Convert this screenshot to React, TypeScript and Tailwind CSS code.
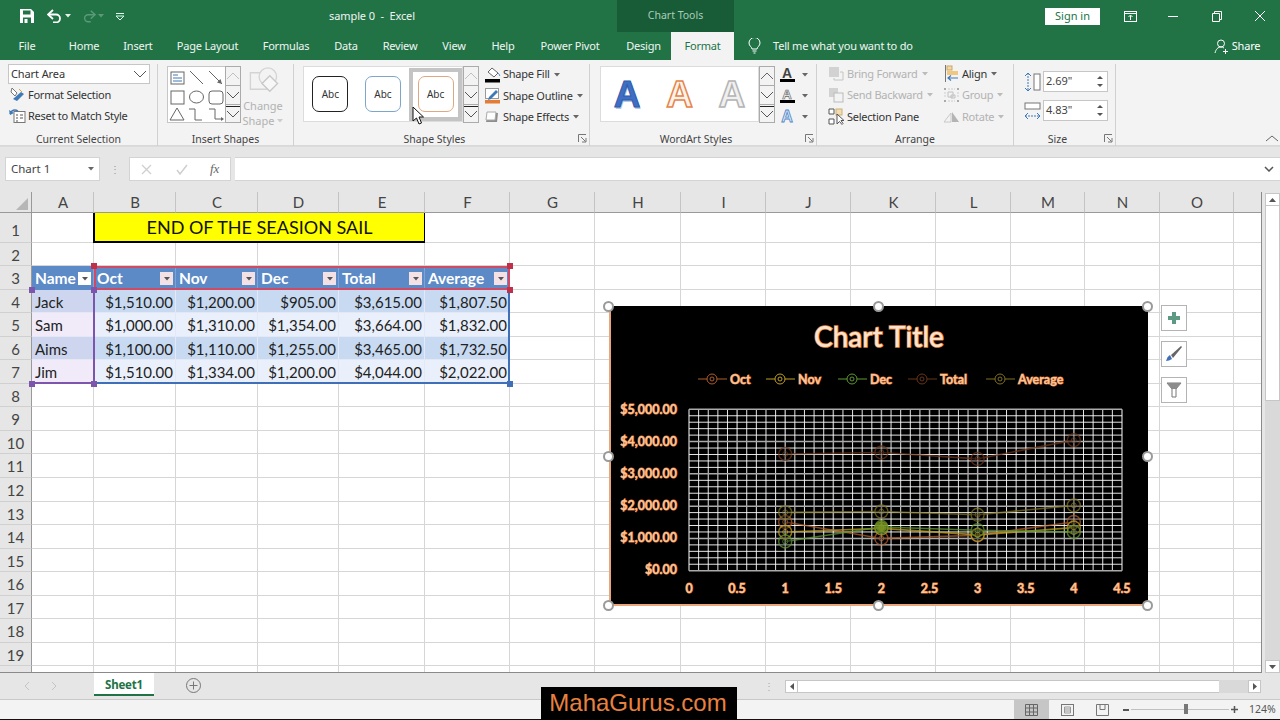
import React from "react";

const UI = "font-['Noto_Sans',sans-serif]";
const LETTERS = ["A","B","C","D","E","F","G","H","I","J","K","L","M","N","O",""];
const DATA = [
  ["Jack","$1,510.00","$1,200.00","$905.00","$3,615.00","$1,807.50"],
  ["Sam","$1,000.00","$1,310.00","$1,354.00","$3,664.00","$1,832.00"],
  ["Aims","$1,100.00","$1,110.00","$1,255.00","$3,465.00","$1,732.50"],
  ["Jim","$1,510.00","$1,334.00","$1,200.00","$4,044.00","$2,022.00"],
];
const TABS: [string,string][] = [
  ["File","w-[54px]"],["Home","w-[60px]"],["Insert","w-[48px]"],["Page Layout","w-[91px]"],["Formulas","w-[66px]"],
  ["Data","w-[54px]"],["Review","w-[54px]"],["View","w-[54px]"],["Help","w-[44px]"],["Power Pivot","w-[90px]"],["Design","w-[57px]"],
];

function Caret({c="#666"}:{c?:string}) {
  return <svg width="6" height="4" viewBox="0 0 6 4" className="shrink-0"><path d="M0 0h6L3 3.5z" fill={c}/></svg>;
}
function Chev({up=false,c="#555"}:{up?:boolean;c?:string}) {
  return <svg width="14" height="8" viewBox="0 0 14 8"><path d={up?"M1 7l6-6 6 6":"M1 1l6 6 6-6"} fill="none" stroke={c} strokeWidth="1"/></svg>;
}
function GalleryScroll({first="#aaa"}:{first?:string}) {
  return (
    <div className="w-[16px] h-[57px] flex flex-col border border-[#ababab] bg-[#f3f3f3] shrink-0">
      <div className="h-[19px] flex items-center justify-center border-b border-[#ababab]"><Chev up c={first}/></div>
      <div className="h-[19px] flex items-center justify-center border-b border-[#ababab]"><Chev/></div>
      <div className="flex-1 flex flex-col items-center"><div className="w-full h-px bg-[#222] mt-[1px] mb-[3px]"/><Chev/></div>
    </div>
  );
}
function Launcher() {
  return <svg width="9" height="9" viewBox="0 0 9 9" className="absolute right-[2px] bottom-[3px]"><path d="M.5 8V.5H8M3 3l4.5 4.5M4 8h4V4" fill="none" stroke="#777" strokeWidth="1"/></svg>;
}
function Group({w,label,children,launcher=false}:{w:string;label:string;children:React.ReactNode;launcher?:boolean}) {
  return (
    <div className={`${w} h-[82px] mt-[4px] relative flex flex-col border-r border-[#d0d0d0] shrink-0`}>
      <div className="h-[64px] min-h-0 shrink-0 flex">{children}</div>
      <div className={`h-[18px] shrink-0 flex items-center justify-center text-[10.5px] text-[#444] pt-[6px] ${launcher?"pr-[14px]":""}`}>{label}</div>
      {launcher && <Launcher/>}
    </div>
  );
}
function RowItem({icon,text,dim=false,caret=false,cn=""}:{icon:React.ReactNode;text:string;dim?:boolean;caret?:boolean;cn?:string}) {
  return (
    <div className={`h-[21.5px] flex items-center gap-[2px] text-[11px] tracking-[-0.25px] ${dim?"text-[#b2b2b2]":"text-[#333]"} ${cn}`}>
      <span className="w-[17px] h-[16px] flex items-center justify-center shrink-0">{icon}</span>
      <span className="whitespace-nowrap">{text}</span>
      {caret && <span className="ml-[2px]"><Caret c={dim?"#bbb":"#666"}/></span>}
    </div>
  );
}
function AbcBox({c,dark=false}:{c:string;dark?:boolean}) {
  return <div className={`w-[36px] h-[36px] rounded-[7px] border bg-white flex items-center justify-center text-[10px] text-[#333] ${dark?"border-[1.5px]":""}`} style={{borderColor:c}}>Abc</div>;
}
const I = {
  format:<svg width="17" height="16" viewBox="0 0 17 16"><path d="M3 1l5 5-2 3-4-4z" fill="#fff" stroke="#777"/><path d="M4 12l8-7 3 2-7 7z" fill="#3f79b8"/><path d="M10 2l3 3" stroke="#e0a040"/></svg>,
  reset:<svg width="17" height="16" viewBox="0 0 17 16"><rect x="5" y="3.5" width="11" height="11" fill="#fff" stroke="#777"/><path d="M7 7h2M11 7h3M7 10h2M11 10h3M7 13h2" stroke="#555"/><path d="M1 6c1-4 5-5 8-3" fill="none" stroke="#3f79b8" strokeWidth="1.4"/><path d="M0 2l1 5 4-2z" fill="#3f79b8"/></svg>,
  fill:<svg width="17" height="16" viewBox="0 0 17 16"><path d="M8 1l6 5-4 4-6-5z" fill="#fff" stroke="#666"/><path d="M14 6c1 1 2 2 1.5 3" stroke="#4a84c4" fill="none"/><rect x="1" y="12" width="15" height="3.5" fill="#000"/></svg>,
  outline:<svg width="17" height="16" viewBox="0 0 17 16"><rect x="1.5" y=".5" width="13" height="10" fill="#fff" stroke="#999"/><path d="M5 9l7-7 2 2-7 7-3 1z" fill="#3f79b8"/><rect x="1" y="12" width="15" height="3.5" fill="#e37c34"/></svg>,
  effects:<svg width="17" height="16" viewBox="0 0 17 16"><path d="M4 4h10l-1 9H2z" fill="#8d8d8d"/><path d="M3 3h9l-1 8H2z" fill="#fdfdfd" stroke="#aaa"/></svg>,
  bring:<svg width="17" height="16" viewBox="0 0 17 16"><rect x="1" y="1" width="10" height="10" fill="#d2d2d2"/><path d="M12 6h3v8H6v-2" fill="none" stroke="#c4c4c4"/></svg>,
  send:<svg width="17" height="16" viewBox="0 0 17 16"><rect x="1" y="1" width="9" height="9" fill="#d2d2d2"/><rect x="6" y="6" width="9" height="9" fill="#f3f3f3" stroke="#bbb"/></svg>,
  pane:<svg width="17" height="17" viewBox="0 0 17 17"><path d="M1 1h5v5H1zM1 11h5v5H1z" fill="#fff" stroke="#555"/><rect x="8" y="1" width="6" height="6" fill="#f2ddae" stroke="#c9b07c"/><path d="M9 6v10l2.5-2.5 2.5 3 1-1-2-3h3z" fill="#fff" stroke="#555"/></svg>,
  align:<svg width="17" height="17" viewBox="0 0 17 17"><path d="M2.5 0v17" stroke="#777"/><rect x="4" y="1" width="5" height="4" fill="#f3d9a6" stroke="#c9a86a"/><rect x="4" y="6" width="11" height="4" fill="#f0c77f"/><path d="M15 13H5M8 10.5L5 13l3 2.5" fill="none" stroke="#3f79b8" strokeWidth="1.2"/></svg>,
  group:<svg width="17" height="16" viewBox="0 0 17 16"><path d="M1 1h2v2H1zM14 1h2v2h-2zM1 13h2v2H1zM14 13h2v2h-2z" fill="#aaa"/><path d="M5 2h7M5 14h7M2 5v6M15 5v6" stroke="#ccc" strokeDasharray="2 1"/><path d="M5 5h5v5H5zM8 8h4v3H8z" fill="none" stroke="#c0c0c0"/></svg>,
  rotate:<svg width="17" height="16" viewBox="0 0 17 16"><path d="M1 13L8 4v9z" fill="none" stroke="#c8c8c8"/><path d="M9 3l7 10H9z" fill="#b4b4b4"/></svg>,
};

function Ribbon() {
  return (
    <div className="h-[86px] bg-[#f3f3f3] flex border-b border-[#d8d8d8] shrink-0 relative">
      <Group w="w-[158px]" label="Current Selection">
        <div className="pl-[8px] flex flex-col">
          <div className="w-[142px] h-[20px] bg-white border border-[#c6c6c6] flex items-center justify-between px-[2px] pr-[2px] text-[11px] tracking-[-0.1px] text-[#333]"><span>Chart Area</span><Chev/></div>
          <RowItem cn="ml-[1px]" icon={I.format} text="Format Selection"/>
          <RowItem cn="ml-[1px]" icon={I.reset} text="Reset to Match Style"/>
        </div>
      </Group>
      <Group w="w-[136px]" label="Insert Shapes">
        <div className="pl-[9px] pt-[2px] flex">
          <div className="w-[58px] h-[57px] bg-white border border-r-0 border-[#c6c6c6]">
            <svg width="58" height="55" viewBox="0 0 58 55">
              <rect x="3" y="5" width="13" height="12" fill="#fff" stroke="#666"/><path d="M5 8h5M5 11h9M5 14h9" stroke="#3f79b8"/>
              <path d="M22 4l13 13M41 4l13 13" stroke="#666"/><path d="M54 17l-5-1.5 3.5-3.5z" fill="#666"/>
              <rect x="3" y="24" width="13" height="13" fill="none" stroke="#666"/><ellipse cx="28.5" cy="30" rx="7" ry="6" fill="none" stroke="#666"/><rect x="41" y="24" width="14" height="13" rx="3" fill="none" stroke="#666"/>
              <path d="M9 41l7 12H2z" fill="none" stroke="#666"/><path d="M21 42h6v11h7M41 42h6v10h7" fill="none" stroke="#666"/><path d="M56 52l-3-2v4z" fill="#666"/>
            </svg>
          </div>
          <GalleryScroll first="#c0c0c0"/>
          <div className="w-[44px] flex flex-col items-center text-[11px] text-[#b2b2b2] leading-[15px]">
            <svg width="32" height="32" viewBox="0 0 32 32" className="mb-[1px]"><path d="M3 7h17v17H3z" fill="none" stroke="#d4d4d4" strokeWidth="1.4"/><circle cx="21" cy="11" r="9" fill="#f3f3f3" stroke="#d4d4d4" strokeWidth="1.4"/><path d="M15 18l8-8 8 8-8 8z" fill="#f7f7f7" stroke="#c8c8c8" strokeWidth="1.4"/></svg>
            <span>Change</span>
            <span className="flex items-center gap-[3px]">Shape<Caret c="#ccc"/></span>
          </div>
        </div>
      </Group>
      <Group w="w-[296px]" label="Shape Styles" launcher>
        <div className="pl-[9px] pt-[2px] flex">
          <div className="w-[160px] h-[56px] bg-white relative flex items-center border border-[#dcdcdc]">
            <div className="w-[53px] flex justify-center"><AbcBox c="#222" dark/></div>
            <div className="w-[53px] flex justify-center"><AbcBox c="#7da6c8"/></div>
            <div className="w-[53px] h-[53px] flex justify-center items-center border-[4px] border-[#c4c4c4]"><AbcBox c="#e0a880"/></div>
            <svg width="13" height="20" viewBox="0 0 13 20" className="absolute left-[108px] top-[39px]"><path d="M1 1v14l3.5-3 2.5 6 2.5-1-2.5-6h4.500z" fill="#fff" stroke="#111"/></svg>
          </div>
          <GalleryScroll first="#c0c0c0"/>
          <div className="pl-[5px] flex flex-col -mt-[2px]">
            <RowItem icon={I.fill} text="Shape Fill" caret/>
            <RowItem icon={I.outline} text="Shape Outline" caret/>
            <RowItem icon={I.effects} text="Shape Effects" caret/>
          </div>
        </div>
      </Group>
      <Group w="w-[227px]" label="WordArt Styles" launcher>
        <div className="pl-[10px] pt-[2px] flex">
          <div className="w-[159px] h-[56px] bg-white border border-[#dcdcdc] flex items-center font-['Liberation_Sans',sans-serif] font-bold text-[37px] leading-none">
            <span className="w-[53px] text-center text-[#3f6fc4] [-webkit-text-stroke:1px_#2f5ba8] [text-shadow:1px_2px_0_#b4c8ea]">A</span>
            <span className="w-[53px] text-center text-[#fdf3ea] [-webkit-text-stroke:1.5px_#e5854a]">A</span>
            <span className="w-[53px] text-center text-[#f0f0f0] [-webkit-text-stroke:1.5px_#b4b4b4]">A</span>
          </div>
          <GalleryScroll first="#666"/>
          <div className="pl-[4px] flex flex-col -mt-[2px] w-[50px]">
            {[
              <><span className="text-[14px] font-bold text-[#444] leading-[11px]">A</span><span className="h-[3px] w-[15px] bg-black"/></>,
              <><span className="text-[13px] text-[#fff] [-webkit-text-stroke:.7px_#666] leading-[11px] font-bold">A</span><span className="h-[3px] w-[15px] bg-black"/></>,
              <><span className="text-[16px] text-[#dbe7f5] [-webkit-text-stroke:.8px_#4f86c6] leading-[16px] font-bold">A</span></>,
            ].map((a,i)=>(
              <div key={i} className="h-[21.5px] flex items-center gap-[7px] font-['Liberation_Sans',sans-serif]">
                <span className="w-[16px] flex flex-col items-center">{a}</span><Caret/>
              </div>
            ))}
          </div>
        </div>
      </Group>
      <Group w="w-[197px]" label="Arrange">
        <div className="pl-[11px] flex -mt-[1px] w-full">
          <div className="w-[115px] flex flex-col shrink-0">
            <RowItem dim icon={I.bring} text="Bring Forward" caret/>
            <RowItem dim icon={I.send} text="Send Backward" caret/>
            <RowItem icon={I.pane} text="Selection Pane"/>
          </div>
          <div className="flex flex-col">
            <RowItem icon={I.align} text="Align" caret/>
            <RowItem dim icon={I.group} text="Group" caret/>
            <RowItem dim icon={I.rotate} text="Rotate" caret/>
          </div>
        </div>
      </Group>
      <Group w="w-[102px]" label="Size" launcher>
        <div className="pl-[10px] pt-[7px] flex flex-col gap-[8px]">
          {[
            ['2.69"',<svg key="a" width="17" height="20" viewBox="0 0 17 20"><path d="M4 1v18" stroke="#3f79b8" strokeDasharray="2 1"/><path d="M1 4l3-3 3 3M1 16l3 3 3-3" fill="none" stroke="#3f79b8"/><rect x="10" y="2" width="6" height="16" fill="#fff" stroke="#777"/></svg>],
            ['4.83"',<svg key="b" width="17" height="20" viewBox="0 0 17 20"><rect x="1" y="2" width="15" height="6" fill="#fff" stroke="#777"/><path d="M1 15h15" stroke="#3f79b8" strokeDasharray="2 1"/><path d="M4 12l-3 3 3 3M13 12l3 3-3 3" fill="none" stroke="#3f79b8"/></svg>],
          ].map((r:any,i)=>(
            <div key={i} className="flex items-center gap-[2px]">
              {r[1]}
              <div className="w-[65px] h-[21px] bg-white border border-[#c6c6c6] flex items-center justify-between pl-[2px] pr-[4px] text-[11px] text-[#444]">
                <span>{r[0]}</span>
                <span className="flex flex-col gap-[5px]"><svg width="6" height="3" viewBox="0 0 6 3"><path d="M0 3h6L3 0z" fill="#555"/></svg><svg width="6" height="3" viewBox="0 0 6 3"><path d="M0 0h6L3 3z" fill="#555"/></svg></span>
              </div>
            </div>
          ))}
        </div>
      </Group>
      <div className="flex-1 relative">
        <svg width="14" height="7" viewBox="0 0 14 7" className="absolute right-[1px] bottom-[3px]"><path d="M1 6l6-5 6 5" fill="none" stroke="#666"/></svg>
      </div>
    </div>
  );
}

function TopBars() {
  return (
    <div className="bg-[#217346] text-white shrink-0">
      <div className="h-[32px] flex items-center relative">
        <svg width="14" height="14" viewBox="0 0 14 14" className="ml-[20px]"><path d="M0 0h11l3 3v11H0z" fill="#fff"/><rect x="3" y="1.5" width="7.5" height="4" fill="#217346"/><rect x="3" y="8.5" width="8" height="5.5" fill="#217346"/><rect x="4.5" y="10" width="3" height="4" fill="#fff"/></svg>
        <svg width="16" height="14" viewBox="0 0 16 14" className="ml-[13px]"><path d="M2 5.5h7a4 4 0 010 8H6" fill="none" stroke="#fff" strokeWidth="1.8"/><path d="M6 1L1 5.5 6 10" fill="none" stroke="#fff" strokeWidth="1.8"/></svg>
        <span className="ml-[2px]"><Caret c="#e6efe9"/></span>
        <svg width="14" height="14" viewBox="0 0 16 14" className="ml-[11px]"><path d="M14 5.5H7a4 4 0 000 8h3" fill="none" stroke="#5d9978" strokeWidth="1.6"/><path d="M10 1l5 4.5L10 10" fill="none" stroke="#5d9978" strokeWidth="1.6"/></svg>
        <span className="ml-[2px]"><Caret c="#5d9978"/></span>
        <svg width="8" height="7" viewBox="0 0 8 7" className="ml-[12px]"><path d="M0 .5h8" stroke="#dfe" /><path d="M0 3h8L4 7z" fill="none" stroke="#dfe"/></svg>
        <div className="w-[120px] ml-[188px] text-center text-[11px] tracking-[-0.1px] text-[#f0f5f2] whitespace-pre">sample 0  -  Excel</div>
        <div className="w-[117px] ml-[185px] h-full bg-[#185c37] flex items-center justify-center text-[10.5px] text-[#a9cdb9]">Chart Tools</div>
        <div className="ml-[311px] w-[55px] h-[17px] bg-white text-[#217346] text-[11px] flex items-center justify-center">Sign in</div>
        <svg width="13" height="11" viewBox="0 0 13 11" className="ml-[24px]"><rect x=".5" y=".5" width="12" height="10" fill="none" stroke="#fff"/><path d="M1 2.5h11M6.5 9V4.5M4.5 6l2-2 2 2" fill="none" stroke="#fff"/></svg>
        <div className="ml-[31px] w-[10px] h-px bg-white"/>
        <svg width="10" height="11" viewBox="0 0 10 11" className="ml-[34px]"><path d="M.5 2.5h7v8h-7zM2.5 2.5V.5h7v8h-2" fill="none" stroke="#fff"/></svg>
        <svg width="10" height="10" viewBox="0 0 10 10" className="ml-[33px]"><path d="M0 0l10 10M10 0L0 10" stroke="#fff"/></svg>
      </div>
      <div className="h-[28px] flex items-center text-[11px] tracking-[-0.2px]">
        {TABS.map(([t,w])=><div key={t} className={`${w} h-full flex items-center justify-center text-[#f0f5f2] shrink-0`}>{t}</div>)}
        <div className="w-[63px] -ml-px h-full bg-[#f3f3f3] text-[#217346] flex items-center justify-center shrink-0">Format</div>
        <svg width="13" height="16" viewBox="0 0 13 16" className="ml-[14px]"><path d="M4 11c0-2-3-3-3-6a5.5 5.5 0 0111 0c0 3-3 4-3 6zM4.5 13h4M5.5 15h2" fill="none" stroke="#fff" strokeWidth="1"/></svg>
        <span className="ml-[12px] text-[#f0f5f2] text-[11px]">Tell me what you want to do</span>
        <svg width="15" height="15" viewBox="0 0 15 15" className="ml-[301px]"><circle cx="7" cy="4.5" r="3.5" fill="none" stroke="#fff"/><path d="M1 14c1-4 3-6 6-6 1 0 2 .3 3 1M9 12.5h5M11.5 10v5" fill="none" stroke="#fff"/></svg>
        <span className="ml-[3px] text-[11px]">Share</span>
      </div>
    </div>
  );
}

function FormulaBar() {
  return (
    <div className="h-[46px] bg-[#e6e6e6] shrink-0 pt-[11px] shadow-[inset_0_1px_0_#dcdcdc]">
      <div className="h-[24px] flex items-stretch">
        <div className="ml-[5px] w-[95px] bg-white border border-[#d4d4d4] flex items-center justify-between px-[5px] text-[11.5px] text-[#444]"><span>Chart 1</span><Caret/></div>
        <div className="w-[29px] flex items-center justify-center text-[#999] text-[10px] leading-none">⋮</div>
        <div className="w-[102px] bg-white border border-[#d4d4d4] flex items-center text-[#c8c8c8] font-['Liberation_Serif',serif]">
          <svg width="11" height="11" viewBox="0 0 11 11" className="ml-[11px]"><path d="M1 1l9 9M10 1l-9 9" stroke="#cfcfcf" strokeWidth="1.3"/></svg>
          <svg width="12" height="11" viewBox="0 0 12 11" className="ml-[24px]"><path d="M1 6l3 4 7-9" fill="none" stroke="#cfcfcf" strokeWidth="1.5"/></svg>
          <span className="ml-[22px] text-[13px] italic text-[#666]">fx</span>
        </div>
        <div className="ml-[4px] flex-1 bg-white border-y border-[#d4d4d4] flex items-center justify-end pr-[6px]"><svg width="10" height="6" viewBox="0 0 10 6"><path d="M1 1l4 4 4-4" fill="none" stroke="#555" strokeWidth="1.5"/></svg></div>
      </div>
    </div>
  );
}

const HDR = "bg-[#e6e6e6] flex items-center justify-center text-[#444] text-[15px]";
const CELL = "border-r border-b border-[#d6d6d6] bg-white";

function Filter({pink=false}:{pink?:boolean}) {
  return <span className={`w-[13px] h-[13px] absolute right-[2px] top-[6px] flex items-center justify-center ${pink?"bg-[#f4e1e6]":"bg-white"}`}><Caret c="#555"/></span>;
}
function Num({n}:{n:number}) {
  return <div className={`${HDR} border-r border-b border-r-[#999] border-b-[#d0d0d0] ${n===1?"pt-[6px]":"pt-[2px]"}`}>{n}</div>;
}
function Blank({n,from=0}:{n:number;from?:number}) {
  return <>{Array.from({length:n}).map((_,i)=><div key={i+from} className={CELL}/>)}</>;
}
function Handle({x,y,c}:{x:number;y:number;c:string}) {
  return <span className="absolute w-[6px] h-[6px]" style={{left:x-3,top:y-3,background:c}}/>;
}

function Sheet() {
  return (
    <div className="relative w-[1262px] h-[481px] overflow-hidden border-r border-b border-[#8a8a8a] shrink-0 font-['Lato',sans-serif]">
      <div className="grid grid-cols-[32px_62px_82px_82px_81px_86px_85px_85px_86px_85px_85px_85px_75px_74px_75px_74px_28px] grid-rows-[20.5px_30px_repeat(19,23.55px)]">
        <div className={`${HDR} border-r border-b border-[#999] relative`}><svg width="12" height="12" viewBox="0 0 12 12" className="absolute right-[3px] bottom-[2px]"><path d="M12 0v12H0z" fill="#b6b6b6"/></svg></div>
        {LETTERS.map((l,i)=><div key={i} className={`${HDR} border-r border-r-[#c4c4c4] border-b border-b-[#999] pt-[1px] pl-[1px]`}>{l}</div>)}
        <Num n={1}/>
        <div className={CELL}/>
        <div className="col-span-4 bg-[#ffff00] border-2 border-t-0 border-black flex items-center justify-center text-[18px] text-[#111] leading-none -ml-px -mr-[1px] pt-[1px]">END OF THE SEASION SAIL</div>
        <Blank n={11}/>
        <Num n={2}/>
        <Blank n={16}/>
        <Num n={3}/>
        {["Name","Oct","Nov","Dec","Total","Average"].map((h,i)=>(
          <div key={h} className="relative bg-[#5b8ac6] border-r border-[#7ea3d3] text-white font-bold text-[15.5px] flex items-center pl-[3px] pt-[2px]">
            {h}<Filter pink={i>0}/>
          </div>
        ))}
        <Blank n={10}/>
        {DATA.map((r,ri)=>(
          <React.Fragment key={ri}>
            <Num n={ri+4}/>
            {r.map((v,ci)=>{
              const bg = ci===0 ? (ri%2===0?"bg-[#cdd6ee]":"bg-[#f0eaf9]") : (ri%2===0?"bg-[#c7daf2]":"bg-[#e9f0fb]");
              return <div key={ci} className={`${bg} border-r border-b border-[#e3e8f4] text-[#222] text-[15px] flex items-center pt-[2px] ${ci===0?"pl-[3px]":"justify-end pr-[2px]"}`}>{v}</div>;
            })}
            <Blank n={10}/>
          </React.Fragment>
        ))}
        {Array.from({length:13}).map((_,i)=>(
          <React.Fragment key={i}>
            <Num n={i+8}/>
            <Blank n={16}/>
          </React.Fragment>
        ))}
      </div>

      <div className="absolute left-[94px] top-[74px] w-[416px] h-[24px] border-2 border-[#d14a63]"/>
      <div className="absolute left-[94px] top-[97px] w-[416px] h-[95px] border-2 border-t-0 border-l-0 border-[#3f6fb8]"/>
      <div className="absolute left-[32px] top-[97px] w-[63px] h-[95px] border-b-2 border-r-2 border-[#7d55ad]"/>
      <Handle x={94} y={74} c="#c0304a"/><Handle x={510} y={74} c="#c0304a"/><Handle x={94} y={98} c="#7d55ad"/><Handle x={510} y={98} c="#c0304a"/>
      <Handle x={32} y={98} c="#7d55ad"/><Handle x={32} y={192} c="#7d55ad"/><Handle x={94} y={192} c="#7d55ad"/><Handle x={510} y={192} c="#3f6fb8"/>

      <Chart/>
      <div className="absolute left-[1161px] top-[113px] w-[26px] h-[26px] bg-white border border-[#b4b4b4] flex items-center justify-center"><svg width="14" height="14" viewBox="0 0 14 14"><path d="M7 1v12M1 7h12" stroke="#5c9a84" strokeWidth="4"/></svg></div>
      <div className="absolute left-[1161px] top-[149px] w-[26px] h-[26px] bg-white border border-[#b4b4b4] flex items-center justify-center"><svg width="18" height="16" viewBox="0 0 18 16"><path d="M1 15c2 0 4-1 6-2l-2-4c-2 1-3 3-4 6z" fill="#3f6fb8"/><path d="M6 9l2 3 9-11-1-1z" fill="#666"/></svg></div>
      <div className="absolute left-[1161px] top-[185px] w-[26px] h-[26px] bg-white border border-[#b4b4b4] flex items-center justify-center"><svg width="16" height="16" viewBox="0 0 16 16"><path d="M1 1h14l-5 6v8H6V7z" fill="#fff" stroke="#777"/><path d="M1 1h14l-5 6H6z" fill="#8c8c8c"/></svg></div>
    </div>
  );
}

function Chart() {
  const yOf=(v:number)=>570.7-v/5000*161.4;
  const xOf=(u:number)=>689+u*96.2;
  const series=[
    {n:"Oct",c:"#b05c2a",d:[1510,1000,1100,1510],lx:712,tx:730},
    {n:"Nov",c:"#c0a020",d:[1200,1310,1110,1334],lx:780,tx:798},
    {n:"Dec",c:"#5f9a30",d:[905,1354,1255,1200],lx:852,tx:870},
    {n:"Total",c:"#6a3418",d:[3615,3664,3465,4044],lx:922,tx:940},
    {n:"Average",c:"#7f7220",d:[1807.5,1832,1732.5,2022],lx:1000,tx:1018},
  ];
  const vs=Array.from({length:46},(_,i)=>i);
  const hs=Array.from({length:26},(_,i)=>i);
  const lab={fill:"#f9c49c",stroke:"#d9702c",strokeWidth:1,paintOrder:"stroke"} as any;
  const handles=[[0,0],[270,0],[539,0],[0,150],[539,150],[0,299],[270,299],[539,299]];
  return (
    <div className="absolute left-[609px] top-[114px] w-[539px] h-[300px] bg-black border-l-2 border-b-2 border-[#e8a67a]">
      <svg width="539" height="300" viewBox="609 306 539 300" className="absolute -left-[2px] top-0 font-['Lato',sans-serif] font-bold">
        {vs.map(i=><line key={i} x1={689+i*9.622} x2={689+i*9.622} y1={409.3} y2={570.7} stroke={i%5===0?"#aaa":"#fff"} strokeWidth={i%5===0?1.5:.9}/>)}
        {hs.map(i=><line key={i} x1={689} x2={1122} y1={409.3+i*6.456} y2={409.3+i*6.456} stroke={i%5===0?"#aaa":"#fff"} strokeWidth={i%5===0?1.5:.9}/>)}
        {series.map(s=>(
          <g key={s.n}>
            <g opacity=".75">
              <polyline points={s.d.map((v,i)=>`${xOf(i+1)},${yOf(v)}`).join(" ")} fill="none" stroke={s.c} strokeWidth="1.6"/>
              {s.d.map((v,i)=><g key={i}><circle cx={xOf(i+1)} cy={yOf(v)} r="6.5" fill="#000" fillOpacity=".35" stroke={s.c} strokeWidth="1.4"/><circle cx={xOf(i+1)} cy={yOf(v)} r="2.5" fill="none" stroke={s.c}/></g>)}
            </g>
            <line x1={s.lx-14} x2={s.lx+15} y1="379" y2="379" stroke={s.c}/>
            <circle cx={s.lx} cy="379" r="5" fill="#000" stroke={s.c}/><circle cx={s.lx} cy="379" r="2" fill="none" stroke={s.c}/>
            <text x={s.tx} y="383.5" fontSize="12.5" {...lab}>{s.n}</text>
          </g>
        ))}
        <circle cx={xOf(2)} cy={yOf(1354)} r="5.5" fill="#7c9a20" fillOpacity=".8"/>
        <text x="879" y="347" textAnchor="middle" fontSize="28" fontWeight="500" fill="#fde3cf" stroke="#e5853f" strokeWidth="1.6" paintOrder="stroke">Chart Title</text>
        {[5,4,3,2,1,0].map((n,i)=><text key={n} x="677" y={413.5+i*32} textAnchor="end" fontSize="12.5" {...lab}>{n===0?"$0.00":`$${n},000.00`}</text>)}
        {["0","0.5","1","1.5","2","2.5","3","3.5","4","4.5"].map((t,i)=><text key={t} x={689+i*48.1} y="592.5" textAnchor="middle" fontSize="12.5" {...lab}>{t}</text>)}
      </svg>
      {handles.map(([x,y],i)=><span key={i} className="absolute w-[11px] h-[11px] rounded-full bg-white border-[2px] border-[#9a9a9a]" style={{left:x-8,top:y-5.5}}/>)}
    </div>
  );
}

function VScroll() {
  return (
    <div className="ml-[3px] w-[15px] h-[481px] flex flex-col shrink-0 pt-[1px]">
      <div className="h-[13px] bg-white border border-[#c6c6c6] flex items-center justify-center"><svg width="7" height="4" viewBox="0 0 7 4"><path d="M0 4h7L3.5 0z" fill="#555"/></svg></div>
      <div className="h-[195px] bg-white border-x border-b border-[#c6c6c6]"/>
      <div className="flex-1 bg-[#d9d9d9]"/>
      <div className="h-[13px] bg-white border border-[#c6c6c6] flex items-center justify-center"><svg width="7" height="4" viewBox="0 0 7 4"><path d="M0 0h7L3.5 4z" fill="#555"/></svg></div>
    </div>
  );
}

function Bottom() {
  return (
    <>
      <div className="h-[27px] bg-[#e6e6e6] flex items-start shrink-0 border-b border-[#c8c8c8]">
        <svg width="5" height="8" viewBox="0 0 5 8" className="ml-[25px] mt-[9px]"><path d="M4 0L0 4l4 4" fill="none" stroke="#c4c4c4"/></svg>
        <svg width="5" height="8" viewBox="0 0 5 8" className="ml-[21px] mt-[9px]"><path d="M1 0l4 4-4 4" fill="none" stroke="#c4c4c4"/></svg>
        <div className="ml-[38px] w-[60px] h-[23px] bg-white border-b-2 border-[#217346] flex items-center justify-center text-[11.5px] font-bold tracking-[-0.2px] text-[#217346] pt-[2px]">Sheet1</div>
        <svg width="15" height="15" viewBox="0 0 15 15" className="ml-[32px] mt-[5px]"><circle cx="7.5" cy="7.5" r="7" fill="none" stroke="#777"/><path d="M7.5 3.5v8M3.5 7.5h8" stroke="#777"/></svg>
        <div className="ml-[563px] mt-[6px] text-[#aaa] text-[10px] leading-[14px]">⋮</div>
        <div className="ml-[11px] mt-[7px] w-[476px] h-[13px] flex bg-[#d9d9d9]">
          <div className="w-[13px] h-full bg-white border border-[#c6c6c6] flex items-center justify-center"><svg width="4" height="7" viewBox="0 0 4 7"><path d="M4 0v7L0 3.5z" fill="#555"/></svg></div>
          <div className="w-[421px] h-full bg-white border-y border-[#c6c6c6]"/>
          <div className="flex-1"/>
          <div className="w-[13px] h-full bg-white border border-[#c6c6c6] flex items-center justify-center"><svg width="4" height="7" viewBox="0 0 4 7"><path d="M0 0v7l4-3.5z" fill="#555"/></svg></div>
        </div>
      </div>
      <div className="h-[19px] bg-[#f3f3f3] border-b border-[#111] box-content flex items-center shrink-0">
        <div className="ml-[1014px] w-[35px] h-full bg-[#c6c6c6] flex items-center justify-center"><svg width="13" height="12" viewBox="0 0 13 12"><path d="M.5.5h12v11H.5zM4.5.5v11M8.5.5v11M.5 4h12M.5 8h12" fill="none" stroke="#666"/></svg></div>
        <svg width="13" height="12" viewBox="0 0 13 12" className="ml-[12px]"><rect x=".5" y=".5" width="12" height="11" fill="none" stroke="#777"/><path d="M3.5 3h6v6h-6zM3.5 5h6M3.5 7h6" fill="none" stroke="#999"/></svg>
        <svg width="13" height="12" viewBox="0 0 13 12" className="ml-[22px]"><path d="M.5.5h12v11H.5zM4 .5v5h5v-5" fill="none" stroke="#777"/></svg>
        <div className="ml-[14px] w-[6px] h-[2px] bg-[#555]"/>
        <div className="ml-[2px] w-[98px] h-px bg-[#c0c0c0] relative"><span className="absolute left-[53px] -top-[5px] w-[4px] h-[10px] bg-[#777]"/></div>
        <svg width="7" height="7" viewBox="0 0 7 7" className="ml-[2px]"><path d="M3.5 0v7M0 3.5h7" stroke="#555" strokeWidth="1.5"/></svg>
        <span className="ml-[11px] text-[10.5px] text-[#555] whitespace-nowrap">124%</span>
      </div>
    </>
  );
}

export default function App() {
  return (
    <div className={`w-[1280px] h-[720px] relative overflow-hidden flex flex-col bg-[#e6e6e6] ${UI}`}>
      <TopBars/>
      <Ribbon/>
      <FormulaBar/>
      <div className="flex h-[482px] shrink-0 overflow-hidden -mb-px">
        <Sheet/>
        <VScroll/>
      </div>
      <Bottom/>
      <div className="absolute left-[541px] top-[687px] w-[196px] h-[33px] bg-black flex items-center justify-center text-[24px] text-[#e8803f] font-['Liberation_Sans',sans-serif] leading-none pb-[1px] pr-[2px]">MahaGurus.com</div>
    </div>
  );
}
